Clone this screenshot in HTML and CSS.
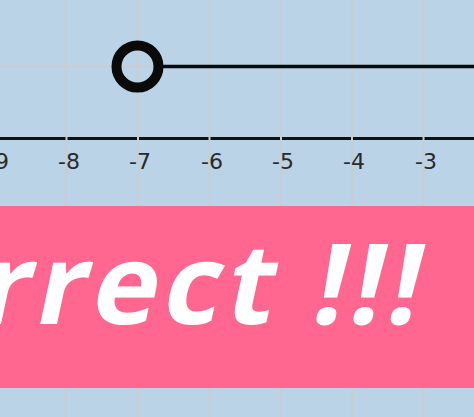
FILE: index.html
```html
<!DOCTYPE html>
<html>
<head>
<meta charset="utf-8">
<link rel="stylesheet" href="styles.css">
</head>
<body>
<div class="board">
  <svg class="plot" width="474" height="206" viewBox="0 0 474 206">
    <g class="axis">
      <line x1="0" y1="138.5" x2="65.5" y2="138.5"/>
      <line x1="67.5" y1="138.5" x2="137" y2="138.5"/>
      <line x1="139" y1="138.5" x2="208.5" y2="138.5"/>
      <line x1="210.5" y1="138.5" x2="280" y2="138.5"/>
      <line x1="282" y1="138.5" x2="351" y2="138.5"/>
      <line x1="353" y1="138.5" x2="422.5" y2="138.5"/>
      <line x1="424.5" y1="138.5" x2="474" y2="138.5"/>
    </g>
    <g class="labels">
      <text x="-2" y="169">-9</text>
      <text x="69" y="169">-8</text>
      <text x="140" y="169">-7</text>
      <text x="212" y="169">-6</text>
      <text x="283" y="169">-5</text>
      <text x="354" y="169">-4</text>
      <text x="426" y="169">-3</text>
    </g>
    <line class="ray" x1="160" y1="66.5" x2="474" y2="66.5"/>
    <circle class="point" cx="137.5" cy="66.5" r="21"/>
  </svg>
  <div class="banner">
    <span class="message">Incorrect !!!</span>
  </div>
</div>
</body>
</html>
```
FILE: styles.css
```css
html, body {
  margin: 0;
  padding: 0;
}
body {
  width: 474px;
  height: 417px;
  overflow: hidden;
  background: #bad3e7;
}
.board {
  width: 474px;
  height: 417px;
  overflow: hidden;
  background-color: #bad3e7;
  background-image:
    linear-gradient(to right, #c9cdd2 0, #c9cdd2 2px, transparent 2px),
    linear-gradient(to bottom, #c9cdd2 0, #c9cdd2 2px, transparent 2px);
  background-size: 71.4px 71.4px;
  background-position: 65.5px 65.5px;
}
.plot {
  display: block;
}
.axis line {
  stroke: #111;
  stroke-width: 3;
}
.labels text {
  font-family: "DejaVu Sans", "Liberation Sans", sans-serif;
  font-size: 22px;
  fill: #2a2a2a;
  text-anchor: middle;
}
.ray {
  stroke: #0a0a0a;
  stroke-width: 3.5;
}
.point {
  fill: none;
  stroke: #0a0a0a;
  stroke-width: 10;
}
.banner {
  height: 182px;
  background: #ff6690;
  display: flex;
  align-items: center;
  justify-content: flex-end;
  padding-right: 52px;
  overflow: visible;
}
.message {
  display: inline-block;
  font-family: "Open Sans", "DejaVu Sans", sans-serif;
  font-weight: 700;
  font-style: normal;
  font-size: 112px;
  line-height: 112px;
  letter-spacing: 5px;
  color: #ffffff;
  white-space: nowrap;
  margin-top: -32px;
  transform: skewX(-12deg);
  transform-origin: 50% 80%;
}
```
